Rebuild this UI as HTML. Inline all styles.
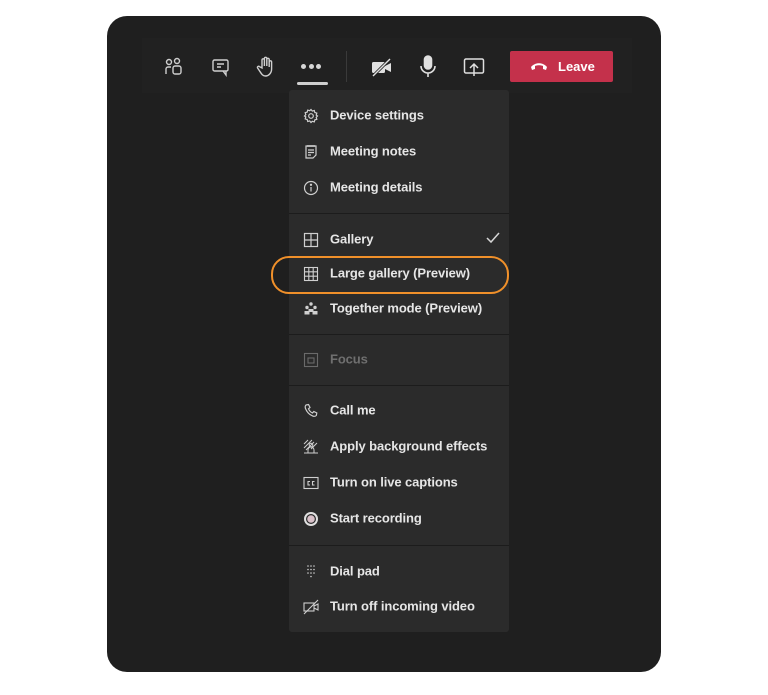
<!DOCTYPE html>
<html><head><style>
body{margin:0;width:768px;height:695px;background:#fff;position:relative;overflow:hidden;font-family:"Liberation Sans",sans-serif}
.win{position:absolute;left:107px;top:16px;width:554px;height:656px;background:#1f1f1f;border-radius:20px}
.bar{position:absolute;left:142px;top:38px;width:490px;height:55px;background:#212121}
.menu{position:absolute;left:289px;top:90px;width:220px;height:542px;background:#2b2b2b;border-radius:3px}
.it{position:absolute;left:41px;font-size:13px;color:#e6e6e6;font-weight:bold;letter-spacing:-.1px;transform:translateY(-50%)}
.ic{position:absolute;left:14px;transform:translateY(-50%)}
.sep{position:absolute;left:0;width:220px;height:1px;background:#1c1c1c}
svg{display:block}
.tb{position:absolute}
</style></head><body>
<div class="win"></div>
<div class="bar"></div>
<!-- toolbar icons -->
<svg class="tb" style="left:164px;top:57px" width="20" height="20" viewBox="0 0 20 20" fill="none" stroke="#cfcfcf" stroke-width="1.4"><circle cx="5" cy="5" r="2.5"/><circle cx="13" cy="4" r="2.5"/><rect x="9" y="9" width="8" height="8" rx="2"/><path d="M2 17v-5a2 2 0 0 1 2-2h3"/></svg>
<svg class="tb" style="left:211px;top:58px" width="20" height="20" viewBox="0 0 20 20" fill="none" stroke="#cfcfcf" stroke-width="1.4"><rect x="2" y="2" width="15" height="11" rx="1.5"/><path d="M6 6h7M6 9h4M12 13l3 4v-4"/></svg>
<svg class="tb" style="left:256px;top:56px" width="20" height="22" viewBox="0 0 20 22" fill="none" stroke="#cfcfcf" stroke-width="1.4"><path d="M6 12V4a1.2 1.2 0 0 1 2.4 0v6V2.5a1.2 1.2 0 0 1 2.4 0V10V3.5a1.2 1.2 0 0 1 2.4 0V11V6a1.2 1.2 0 0 1 2.4 0v7c0 4-3 7-6 7-3 0-4-2-6-5l-2-3a1.2 1.2 0 0 1 2-1.3z"/></svg>
<div class="tb" style="left:301px;top:64px;font-size:0">
<span style="display:inline-block;width:5px;height:5px;border-radius:50%;background:#d6d6d6;margin-right:2.5px"></span><span style="display:inline-block;width:5px;height:5px;border-radius:50%;background:#d6d6d6;margin-right:2.5px"></span><span style="display:inline-block;width:5px;height:5px;border-radius:50%;background:#d6d6d6"></span></div>
<div class="tb" style="left:297px;top:82px;width:31px;height:3px;border-radius:2px;background:#cfcfcf"></div>
<div class="tb" style="left:346px;top:51px;width:1px;height:31px;background:#3a3a3a"></div>
<svg class="tb" style="left:371px;top:56px" width="22" height="22" viewBox="0 0 22 22"><rect x="1" y="6" width="13" height="11" rx="1.5" fill="#e0e0e0"/><path d="M14 10l6-3v9l-6-3z" fill="#e0e0e0"/><path d="M2 20L19 3" stroke="#1f1f1f" stroke-width="3"/><path d="M2 20L19 3" stroke="#e0e0e0" stroke-width="1.4"/></svg>
<svg class="tb" style="left:418px;top:55px" width="20" height="24" viewBox="0 0 20 24" fill="none" stroke="#e0e0e0" stroke-width="1.6"><rect x="6.5" y="1" width="7" height="13" rx="3.5" fill="#e0e0e0"/><path d="M3 11a7 7 0 0 0 14 0M10 18v4"/></svg>
<svg class="tb" style="left:463px;top:56px" width="22" height="22" viewBox="0 0 22 22" fill="none" stroke="#e0e0e0" stroke-width="1.5"><rect x="1.5" y="3" width="19" height="14" rx="1.5"/><path d="M11 20V8M7 12l4-4 4 4"/></svg>
<div class="tb" style="left:510px;top:51px;width:103px;height:31px;background:#c4314b;border-radius:2px"></div>
<svg class="tb" style="left:530px;top:61px" width="18" height="10" viewBox="0 0 18 10"><path d="M1 6c4-5 12-5 16 0l-1 3-3-1V5c-2-1-6-1-8 0v3l-3 1z" fill="#fff"/></svg>
<div class="tb" style="left:558px;top:59px;color:#fff;font-size:13px;font-weight:bold">Leave</div>

<div class="menu">
<div class="sep" style="top:123px"></div>
<div class="sep" style="top:244px"></div>
<div class="sep" style="top:295px"></div>
<div class="sep" style="top:455px"></div>

<svg class="ic" style="top:26px" width="16" height="16" viewBox="0 0 16 16" fill="none" stroke="#cfcfcf" stroke-width="1.2"><circle cx="8" cy="8" r="2.3"/><path d="M8 1.5l1.3 1.6 2-.6.5 2 2 .6-.6 2L14.5 8l-1.3 1.3.6 2-2 .6-.5 2-2-.6L8 14.5l-1.3-1.6-2 .6-.5-2-2-.6.6-2L1.5 8l1.3-1.3-.6-2 2-.6.5-2 2 .6z"/></svg>
<div class="it" style="top:25px">Device settings</div>
<svg class="ic" style="top:62px" width="16" height="16" viewBox="0 0 16 16" fill="none" stroke="#cfcfcf" stroke-width="1.2"><path d="M3 2h10v9l-3 3H3z"/><path d="M5 1v2M7 1v2M9 1v2M11 1v2M5 6h6M5 8.5h6M5 11h3"/></svg>
<div class="it" style="top:61px">Meeting notes</div>
<svg class="ic" style="top:98px" width="16" height="16" viewBox="0 0 16 16" fill="none" stroke="#cfcfcf" stroke-width="1.2"><circle cx="8" cy="8" r="6.5"/><path d="M8 7v4.5"/><circle cx="8" cy="4.8" r=".6" fill="#cfcfcf"/></svg>
<div class="it" style="top:97px">Meeting details</div>

<svg class="ic" style="top:150px" width="16" height="16" viewBox="0 0 16 16" fill="none" stroke="#cfcfcf" stroke-width="1.2"><rect x="1.5" y="1.5" width="13" height="13"/><path d="M8 1.5v13M1.5 8h13"/></svg>
<div class="it" style="top:149px">Gallery</div>
<svg style="position:absolute;left:197px;top:142px" width="14" height="12" viewBox="0 0 14 12" fill="none" stroke="#d6d6d6" stroke-width="1.5"><path d="M1 6l4 4 8-9"/></svg>
<svg class="ic" style="top:184px" width="16" height="16" viewBox="0 0 16 16" fill="none" stroke="#cfcfcf" stroke-width="1.1"><rect x="1.5" y="1.5" width="13" height="13"/><path d="M5.8 1.5v13M10.2 1.5v13M1.5 5.8h13M1.5 10.2h13"/></svg>
<div class="it" style="top:183px">Large gallery (Preview)</div>
<svg class="ic" style="top:219px" width="16" height="16" viewBox="0 0 16 16" fill="#cfcfcf"><circle cx="8" cy="3" r="1.7"/><circle cx="4" cy="6.5" r="1.7"/><circle cx="12" cy="6.5" r="1.7"/><path d="M5.5 8h5v3h-5zM1.5 10h5v3.5h-5zM9.5 10h5v3.5h-5z"/></svg>
<div class="it" style="top:218px">Together mode (Preview)</div>

<svg class="ic" style="top:270px" width="16" height="16" viewBox="0 0 16 16" fill="none" stroke="#6a6a6a" stroke-width="1.1"><rect x="1.5" y="1.5" width="13" height="13"/><rect x="5" y="6" width="6" height="5"/></svg>
<div class="it" style="top:269px;color:#6f6f6f">Focus</div>

<svg class="ic" style="top:321px" width="16" height="16" viewBox="0 0 16 16" fill="none" stroke="#cfcfcf" stroke-width="1.2"><path d="M3 2l2.5-.5 1.5 3-1.5 1.3c.8 2 2 3.3 4 4.2l1.3-1.5 3 1.5-.5 2.5c-1 1-2.5 1-4 .3C6 11.5 4 9 2.7 6 2 4.5 2 3 3 2z"/></svg>
<div class="it" style="top:320px">Call me</div>
<svg class="ic" style="top:357px" width="16" height="16" viewBox="0 0 16 16" fill="none" stroke="#cfcfcf" stroke-width="1"><path d="M1 5l4-4M1 9l8-8M3 11l8-8M8 10l6-6M1 14h14M5 14v-3a3 3 0 0 1 6 0v3"/><circle cx="8" cy="6" r="1.8"/></svg>
<div class="it" style="top:356px">Apply background effects</div>
<svg class="ic" style="top:393px" width="16" height="16" viewBox="0 0 16 16" fill="none" stroke="#cfcfcf" stroke-width="1.1"><rect x="1" y="2.5" width="14" height="11"/><path d="M7 6.5H5v3.5h2M11.5 6.5h-2v3.5h2"/></svg>
<div class="it" style="top:392px">Turn on live captions</div>
<svg class="ic" style="top:429px" width="16" height="16" viewBox="0 0 16 16"><circle cx="8" cy="8" r="7" fill="#e0e0e0"/><circle cx="8" cy="8" r="5" fill="#2b2b2b"/><circle cx="8" cy="8" r="3.8" fill="#d8c0c8"/></svg>
<div class="it" style="top:428px">Start recording</div>

<svg class="ic" style="top:482px" width="16" height="16" viewBox="0 0 16 16" fill="#cfcfcf"><circle cx="5" cy="2" r=".8"/><circle cx="8" cy="2" r=".8"/><circle cx="11" cy="2" r=".8"/><circle cx="5" cy="5.5" r=".8"/><circle cx="8" cy="5.5" r=".8"/><circle cx="11" cy="5.5" r=".8"/><circle cx="5" cy="9" r=".8"/><circle cx="8" cy="9" r=".8"/><circle cx="11" cy="9" r=".8"/><circle cx="8" cy="12.5" r=".8"/></svg>
<div class="it" style="top:481px">Dial pad</div>
<svg class="ic" style="top:517px" width="16" height="16" viewBox="0 0 16 16" fill="none" stroke="#cfcfcf" stroke-width="1.1"><rect x="1" y="4" width="10" height="8"/><path d="M11 7l4-2v6l-4-2M1 15L15 1"/></svg>
<div class="it" style="top:516px">Turn off incoming video</div>
</div>
<div style="position:absolute;left:271px;top:256px;width:234px;height:34px;border:2px solid #f0902a;border-radius:18px"></div>
</body></html>
